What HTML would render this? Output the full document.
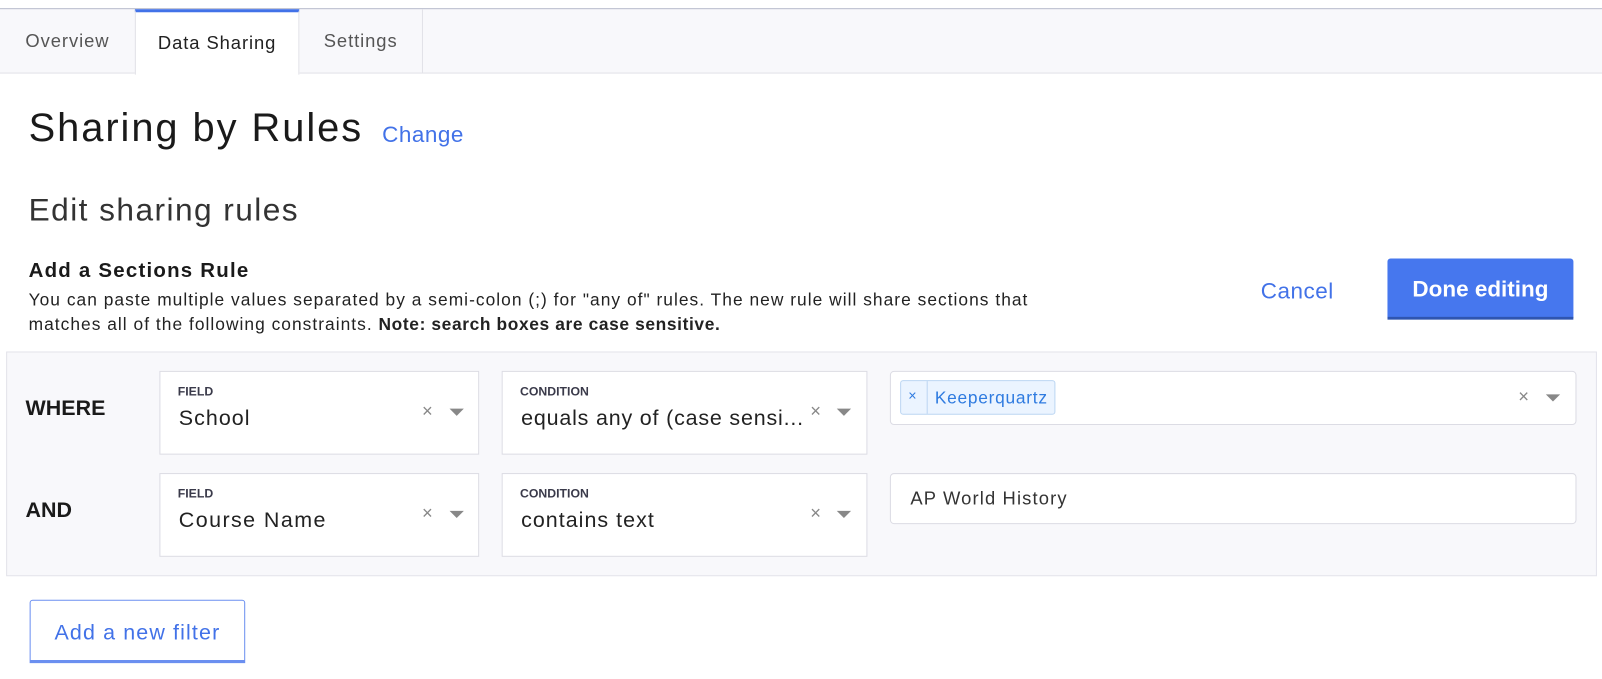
<!DOCTYPE html><html><head><style>
*{box-sizing:border-box;margin:0;padding:0}
body{width:1602px;height:679px;background:#fff;font-family:"Liberation Sans",sans-serif;color:#1a1a1a;position:relative;overflow:hidden}
#w{position:absolute;left:0;top:0;width:1568px;height:665px;transform:scale(1.0217);transform-origin:0 0}
.a{position:absolute;white-space:nowrap}
.tab{position:absolute;top:9px;height:63px;line-height:63px;font-size:18px;color:#555;text-align:center;border-right:1px solid #e2e2e8;letter-spacing:0.9px}
.box{position:absolute;background:#fff;border:1px solid #dcdce4}
.lbl{position:absolute;left:17px;top:12px;font-size:12px;color:#3a3a4a;font-weight:bold}
.val{position:absolute;left:18px;top:34px;font-size:21px;color:#222;white-space:nowrap;letter-spacing:1px}
.x{position:absolute;font-size:18px;color:#888}
.tri{position:absolute;width:0;height:0;border-left:7px solid transparent;border-right:7px solid transparent;border-top:7px solid #888}
</style></head><body><div id="w">
<div class="a" style="left:0;top:8px;width:1568px;height:64px;background:#f8f8fb;border-top:1px solid #b8bccb;border-bottom:1px solid #e2e2e8"></div>
<div class="tab" style="left:0;width:133px">Overview</div>
<div class="tab" style="left:132px;width:161px;background:#fff;border-left:1px solid #e2e2e8;border-top:3px solid #4272e8;height:64px;line-height:60px;color:#222">Data Sharing</div>
<div class="tab" style="left:293px;width:121px">Settings</div>
<div class="a" style="left:28px;top:104px;font-size:39px;color:#1a1a1a;letter-spacing:1.9px">Sharing by Rules</div>
<div class="a" style="left:374px;top:119px;font-size:22px;color:#4272e8;letter-spacing:0.5px">Change</div>
<div class="a" style="left:28px;top:188px;font-size:31px;color:#333;letter-spacing:1.4px">Edit sharing rules</div>
<div class="a" style="left:28px;top:254px;font-size:20px;font-weight:bold;letter-spacing:1.2px">Add a Sections Rule</div>
<div class="a" style="left:28px;top:282px;font-size:17px;line-height:24px;color:#222;letter-spacing:1px">You can paste multiple values separated by a semi-colon (;) for "any of" rules. The new rule will share sections that<br>matches all of the following constraints. <b style="letter-spacing:0.6px">Note: search boxes are case sensitive.</b></div>
<div class="a" style="left:1234px;top:272px;font-size:22px;color:#4272e8;letter-spacing:0.5px">Cancel</div>
<div class="a" style="left:1358px;top:253px;width:182px;height:60px;background:#4677ee;border-bottom:3px solid #2f55b0;border-radius:3px 3px 0 0;color:#fff;font-size:22px;font-weight:bold;text-align:center;line-height:60px">Done editing</div>
<div class="a" style="left:6px;top:344px;width:1557px;height:220px;background:#f8f8fb;border:1px solid #e3e3ea"></div>
<div class="a" style="left:25px;top:388px;font-size:21px;font-weight:bold">WHERE</div>
<div class="a" style="left:25px;top:488px;font-size:21px;font-weight:bold">AND</div>
<div class="box" style="left:156px;top:363px;width:313px;height:82px"><div class="lbl">FIELD</div><div class="val">School</div><div class="x" style="left:256px;top:28px">×</div><div class="tri" style="left:283px;top:36px"></div></div>
<div class="box" style="left:491px;top:363px;width:358px;height:82px"><div class="lbl">CONDITION</div><div class="val" style="letter-spacing:0.8px">equals any of (case sensi...</div><div class="x" style="left:301px;top:28px">×</div><div class="tri" style="left:327px;top:36px"></div></div>
<div class="box" style="left:871px;top:363px;width:672px;height:53px;border-radius:4px"><div class="a" style="left:9px;top:8px;width:152px;height:34px;background:#ebf4ff;border:1px solid #bcd6f2;border-radius:3px;color:#2f7be0"><span class="a" style="left:7px;top:6px;font-size:14px">×</span><span class="a" style="left:25px;top:0;height:32px;border-left:1px solid #bcd6f2"></span><span class="a" style="left:33px;top:7px;font-size:17px;letter-spacing:0.7px">Keeperquartz</span></div><div class="x" style="left:614px;top:14px">×</div><div class="tri" style="left:641px;top:22px"></div></div>
<div class="box" style="left:156px;top:463px;width:313px;height:82px"><div class="lbl">FIELD</div><div class="val" style="letter-spacing:1.4px">Course Name</div><div class="x" style="left:256px;top:28px">×</div><div class="tri" style="left:283px;top:36px"></div></div>
<div class="box" style="left:491px;top:463px;width:358px;height:82px"><div class="lbl">CONDITION</div><div class="val">contains text</div><div class="x" style="left:301px;top:28px">×</div><div class="tri" style="left:327px;top:36px"></div></div>
<div class="box" style="left:871px;top:463px;width:672px;height:50px;border-radius:4px"><div class="a" style="left:19px;top:14px;font-size:18px;color:#333;letter-spacing:1.1px">AP World History</div></div>
<div class="a" style="left:29px;top:587px;width:211px;height:62px;border:1px solid #6b8ff0;border-bottom:3px solid #6b8ff0;border-radius:3px 3px 0 0;color:#4272e8;font-size:21px;text-align:center;line-height:64px;letter-spacing:1.1px">Add a new filter</div>
</div></body></html>
